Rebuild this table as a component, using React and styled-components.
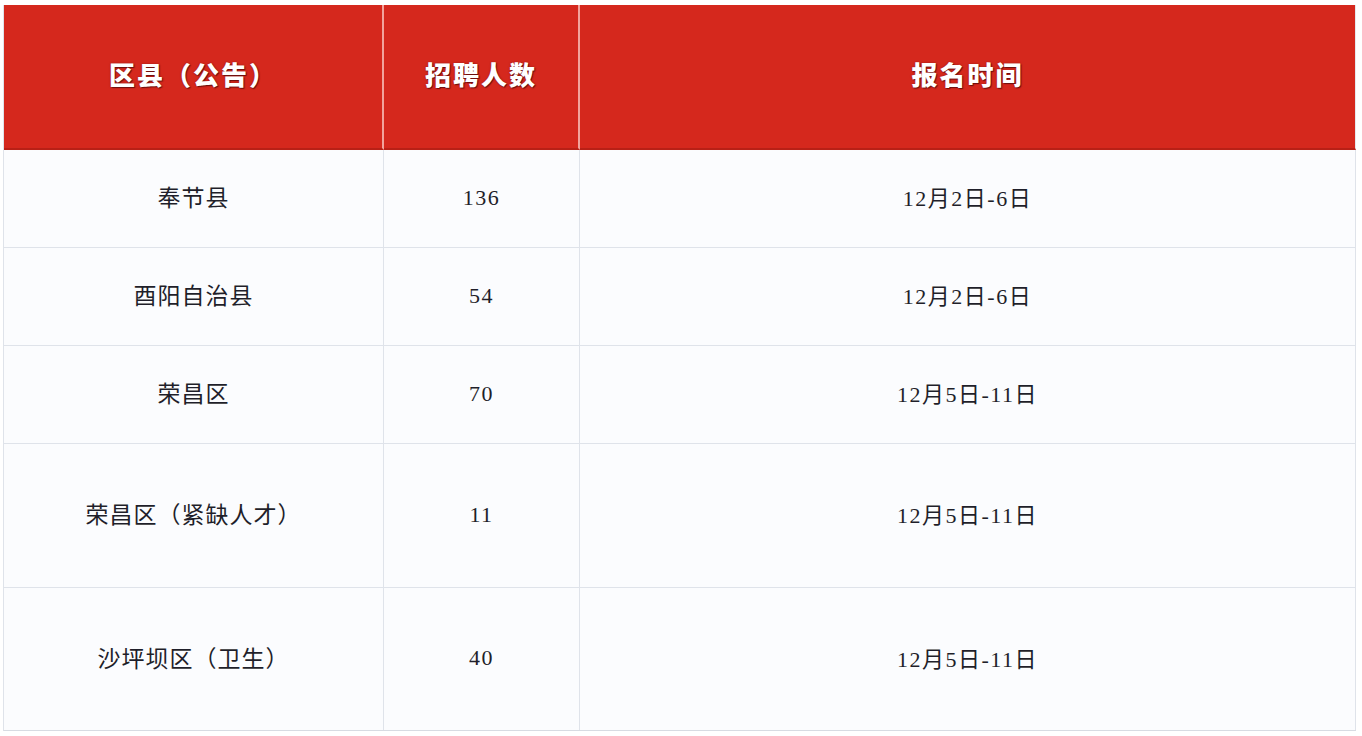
import React from "react";
import styled, { createGlobalStyle } from "styled-components";

const Global = createGlobalStyle`
  html, body { margin: 0; padding: 0; background: #ffffff; }
  body { font-family: "Liberation Serif", "Noto Sans CJK SC", serif; }
`;

const Page = styled.div`
  width: 1362px;
  height: 736px;
  padding: 5px 0 0 3px;
  box-sizing: border-box;
  background: #ffffff;
`;

const Table = styled.div`
  display: grid;
  grid-template-columns: 380px 196px 776px;
  grid-template-rows: 145px 98px 98px 98px 144px 142px;
  width: 1352px;
  border-left: 1px solid #dfe3ea;
  border-bottom: 1px solid #d7dbe2;
  background: #fbfcfe;
`;

const HeadCell = styled.div`
  display: flex;
  align-items: center;
  justify-content: center;
  background: #d5281d;
  color: #ffffff;
  font-family: "Noto Sans CJK SC", sans-serif;
  font-weight: 900;
  font-size: 26px;
  letter-spacing: 2px;
  padding-bottom: 6px;
  box-sizing: border-box;
  text-shadow: 1px 1px 1px rgba(90, 10, 10, 0.85), 0 0 2px rgba(90, 10, 10, 0.5);
  border-right: ${(p) => (p.$last ? "1px solid #e5e8ee" : "2px solid #f2a39c")};
  border-bottom: 2px solid #b82016;
`;

const Cell = styled.div`
  display: flex;
  align-items: center;
  justify-content: center;
  color: #1f1f2a;
  font-family: ${(p) =>
    p.$cjk ? '"Noto Sans CJK SC", sans-serif' : '"Liberation Serif", "Noto Sans CJK SC", serif'};
  font-size: ${(p) => (p.$cjk ? "23px" : "22px")};
  letter-spacing: ${(p) => (p.$cjk ? "1px" : "1.5px")};
  padding-bottom: ${(p) => p.$shift};
  border-right: 1px solid #dfe3ea;
  border-bottom: ${(p) => (p.$lastRow ? "none" : "1px solid #dfe3ea")};
  box-sizing: border-box;
`;

const rows = [
  ["奉节县", "136", "12月2日-6日"],
  ["酉阳自治县", "54", "12月2日-6日"],
  ["荣昌区", "70", "12月5日-11日"],
  ["荣昌区（紧缺人才）", "11", "12月5日-11日"],
  ["沙坪坝区（卫生）", "40", "12月5日-11日"],
];

export default function App() {
  return (
    <>
      <Global />
      <Page>
        <Table>
          <HeadCell>区县（公告）</HeadCell>
          <HeadCell>招聘人数</HeadCell>
          <HeadCell $last>报名时间</HeadCell>
          {rows.map((r, i) => {
            const last = i === rows.length - 1;
            return (
              <React.Fragment key={i}>
                <Cell $cjk $shift="5px" $lastRow={last}>{r[0]}</Cell>
                <Cell $shift="2px" $lastRow={last}>{r[1]}</Cell>
                <Cell $shift="5px" $lastRow={last}>{r[2]}</Cell>
              </React.Fragment>
            );
          })}
        </Table>
      </Page>
    </>
  );
}
